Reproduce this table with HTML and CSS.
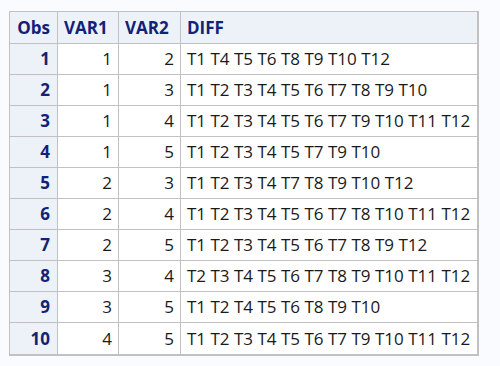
FILE: index.html
```html
<!DOCTYPE html>
<html>
<head>
<meta charset="utf-8">
<link rel="stylesheet" href="styles.css">
</head>
<body>
<div class="wrap">
<table class="tbl">
<colgroup><col class="c-obs"><col class="c-v1"><col class="c-v2"><col class="c-diff"></colgroup>
<thead>
<tr><th class="obs">Obs</th><th>VAR1</th><th>VAR2</th><th>DIFF</th></tr>
</thead>
<tbody>
<tr><th class="obs">1</th><td class="num">1</td><td class="num">2</td><td>T1 T4 T5 T6 T8 T9 T10 T12</td></tr>
<tr><th class="obs">2</th><td class="num">1</td><td class="num">3</td><td>T1 T2 T3 T4 T5 T6 T7 T8 T9 T10</td></tr>
<tr><th class="obs">3</th><td class="num">1</td><td class="num">4</td><td>T1 T2 T3 T4 T5 T6 T7 T9 T10 T11 T12</td></tr>
<tr><th class="obs">4</th><td class="num">1</td><td class="num">5</td><td>T1 T2 T3 T4 T5 T7 T9 T10</td></tr>
<tr><th class="obs">5</th><td class="num">2</td><td class="num">3</td><td>T1 T2 T3 T4 T7 T8 T9 T10 T12</td></tr>
<tr><th class="obs">6</th><td class="num">2</td><td class="num">4</td><td>T1 T2 T3 T4 T5 T6 T7 T8 T10 T11 T12</td></tr>
<tr><th class="obs">7</th><td class="num">2</td><td class="num">5</td><td>T1 T2 T3 T4 T5 T6 T7 T8 T9 T12</td></tr>
<tr><th class="obs">8</th><td class="num">3</td><td class="num">4</td><td>T2 T3 T4 T5 T6 T7 T8 T9 T10 T11 T12</td></tr>
<tr><th class="obs">9</th><td class="num">3</td><td class="num">5</td><td>T1 T2 T4 T5 T6 T8 T9 T10</td></tr>
<tr><th class="obs">10</th><td class="num">4</td><td class="num">5</td><td>T1 T2 T3 T4 T5 T6 T7 T9 T10 T11 T12</td></tr>
</tbody>
</table>
</div>
</body>
</html>
```
FILE: styles.css
```css
html, body {
  margin: 0;
  padding: 0;
  background: #fafbfe;
}
.wrap {
  padding: 11px 0 0 9px;
}
.tbl {
  border-collapse: separate;
  border-spacing: 0;
  border: 1px solid #c1c1c1;
  border-width: 1px 2px 2px 1px;
  font-family: "Open Sans", "Noto Sans", sans-serif;
  font-size: 17px;
  table-layout: fixed;
  width: 467px;
}
.c-obs { width: 48px; }
.c-v1 { width: 61px; }
.c-v2 { width: 62px; }
.c-diff { width: 296px; }
.tbl th, .tbl td {
  border-right: 1px solid #c1c1c1;
  border-bottom: 1px solid #c1c1c1;
  padding: 0 6px;
  height: 31px;
  box-sizing: border-box;
  white-space: nowrap;
  line-height: 20px;
}
.tbl tr > :last-child { border-right: 0; }
.tbl tbody tr:last-child > * { border-bottom: 0; }
.tbl thead th {
  background: #edf2f9;
  color: #112277;
  font-weight: bold;
  text-align: left;
  height: 32px;
}
.tbl thead th.obs { text-align: center; }
.tbl tbody th.obs {
  background: #edf2f9;
  color: #112277;
  font-weight: bold;
  text-align: right;
  padding-right: 7px;
}
.tbl td {
  background: #ffffff;
  color: #1a1a1a;
}
.tbl td.num { text-align: right; }
```
